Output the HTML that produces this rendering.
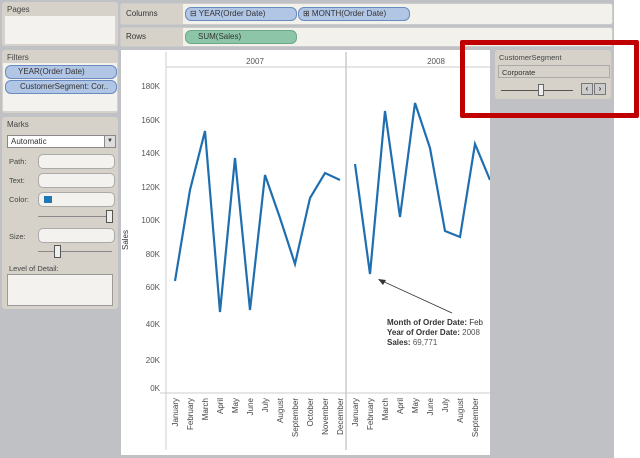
<!DOCTYPE html>
<html><head><style>
body{margin:0;width:640px;height:458px;background:#fff;position:relative;overflow:hidden;font-family:"Liberation Sans",sans-serif;font-size:8px;color:#333}
.a{position:absolute}
.panel{background:#d6d2ca;border-radius:3px}
.hd{font-size:8px;color:#444;padding:3px 0 0 5px}
.pill{position:absolute;height:12px;border:1px solid #6a8bbf;border-radius:6px;background:#b1c5e4;font-size:8px;line-height:12px;color:#333}
.fld{position:absolute;left:36px;width:75px;height:13px;background:#f3f2ef;border:1px solid #aaa;border-radius:5px}
.lbl{position:absolute;left:7px;font-size:7.5px;color:#444}
</style></head><body>
<div class="a" style="left:0;top:0;width:614px;height:458px;background:#c0c1c5"></div>
<!-- left -->
<div class="a panel" style="left:2px;top:2px;width:116px;height:44px"><div class="hd">Pages</div><div class="a" style="left:3px;top:14px;width:110px;height:28px;background:#f3f2ef"></div></div>
<div class="a panel" style="left:2px;top:50px;width:116px;height:63px"><div class="hd">Filters</div>
<div class="a" style="left:1px;top:13px;width:114px;height:48px;background:#f3f2ef"></div>
<div class="pill" style="left:3px;top:15px;width:110px;padding-left:0"><span style="margin-left:12px">YEAR(Order Date)</span></div>
<div class="pill" style="left:3px;top:30px;width:110px"><span style="margin-left:14px">CustomerSegment: Cor..</span></div></div>
<div class="a panel" style="left:2px;top:117px;width:116px;height:192px"><div class="hd">Marks</div>
<div class="a" style="left:5px;top:18px;width:104px;height:11px;background:#fff;border:1px solid #888;font-size:8px;line-height:11px;padding-left:3px">Automatic<div class="a" style="right:0;top:0;width:10px;height:11px;background:#ddd;border-left:1px solid #888;font-size:6px;text-align:center">▼</div></div>
<div class="lbl" style="top:40px">Path:</div><div class="fld" style="top:37px"></div>
<div class="lbl" style="top:59px">Text:</div><div class="fld" style="top:56px"></div>
<div class="lbl" style="top:78px">Color:</div><div class="fld" style="top:75px"><div class="a" style="left:5px;top:3px;width:8px;height:7px;background:#1f77b4"></div></div>
<div class="a" style="left:36px;top:99px;width:74px;height:1px;background:#888"></div><div class="a" style="left:104px;top:93px;width:5px;height:11px;background:#eee;border:1px solid #555"></div>
<div class="lbl" style="top:115px">Size:</div><div class="fld" style="top:111px"></div>
<div class="a" style="left:36px;top:134px;width:74px;height:1px;background:#888"></div><div class="a" style="left:52px;top:128px;width:5px;height:11px;background:#eee;border:1px solid #555"></div>
<div class="lbl" style="top:147px">Level of Detail:</div>
<div class="a" style="left:5px;top:157px;width:104px;height:30px;background:#f3f2ef;border:1px solid #999"></div>
</div>
<!-- shelves -->
<div class="a panel" style="left:120px;top:3px;width:491px;height:20px;background:#f2f1ec;border:1px solid #ccc"><div class="a" style="left:0;top:0;width:62px;height:20px;background:#d6d2ca;font-size:8px;line-height:20px;padding-left:5px;box-sizing:border-box">Columns</div>
<div class="pill" style="left:64px;top:3px;width:110px"><span style="margin-left:4px">⊟ YEAR(Order Date)</span></div>
<div class="pill" style="left:177px;top:3px;width:110px"><span style="margin-left:4px">⊞ MONTH(Order Date)</span></div></div>
<div class="a panel" style="left:120px;top:27px;width:491px;height:18px;background:#f2f1ec;border:1px solid #ccc"><div class="a" style="left:0;top:0;width:62px;height:18px;background:#d6d2ca;font-size:8px;line-height:18px;padding-left:5px;box-sizing:border-box">Rows</div>
<div class="pill" style="left:64px;top:2px;width:110px;background:#8dc5a8;border-color:#6aa98a"><span style="margin-left:12px">SUM(Sales)</span></div></div>
<!-- chart -->
<svg class="a" style="left:121px;top:50px" width="369" height="405" viewBox="121 50 369 405">
<rect x="121" y="50" width="369" height="405" fill="#fff"/>
<line x1="166" y1="52" x2="166" y2="450" stroke="#ccc"/>
<line x1="346" y1="52" x2="346" y2="450" stroke="#ccc" stroke-width="1.5"/>
<line x1="166" y1="67" x2="490" y2="67" stroke="#ccc"/>
<line x1="160" y1="393" x2="490" y2="393" stroke="#ccc"/>
<g font-size="8" fill="#555" text-anchor="middle"><text x="255" y="64">2007</text><text x="436" y="64">2008</text></g>
<g font-size="8" fill="#555" text-anchor="end">
<text x="160" y="89">180K</text><text x="160" y="123">160K</text><text x="160" y="156">140K</text><text x="160" y="190">120K</text><text x="160" y="223">100K</text><text x="160" y="257">80K</text><text x="160" y="290">60K</text><text x="160" y="327">40K</text><text x="160" y="363">20K</text><text x="160" y="391">0K</text></g>
<text transform="translate(128,240) rotate(-90)" font-size="8" fill="#333" text-anchor="middle">Sales</text>
<g font-size="8" fill="#444" text-anchor="end" id="m">
<text transform="translate(178,398) rotate(-90)">January</text><text transform="translate(193,398) rotate(-90)">February</text><text transform="translate(208,398) rotate(-90)">March</text><text transform="translate(223,398) rotate(-90)">April</text><text transform="translate(238,398) rotate(-90)">May</text><text transform="translate(253,398) rotate(-90)">June</text><text transform="translate(268,398) rotate(-90)">July</text><text transform="translate(283,398) rotate(-90)">August</text><text transform="translate(298,398) rotate(-90)">September</text><text transform="translate(313,398) rotate(-90)">October</text><text transform="translate(328,398) rotate(-90)">November</text><text transform="translate(343,398) rotate(-90)">December</text>
<text transform="translate(358,398) rotate(-90)">January</text><text transform="translate(373,398) rotate(-90)">February</text><text transform="translate(388,398) rotate(-90)">March</text><text transform="translate(403,398) rotate(-90)">April</text><text transform="translate(418,398) rotate(-90)">May</text><text transform="translate(433,398) rotate(-90)">June</text><text transform="translate(448,398) rotate(-90)">July</text><text transform="translate(463,398) rotate(-90)">August</text><text transform="translate(478,398) rotate(-90)">September</text></g>
<polyline fill="none" stroke="#1f6fb0" stroke-width="2.2" stroke-linejoin="miter" points="175,281 190,190 205,131 220,312 235,158 250,310 265,175 280,218 295,264 310,198 325,173 340,180"/>
<polyline fill="none" stroke="#1f6fb0" stroke-width="2.2" points="355,164 370,274 385,111 400,217 415,103 430,148 445,231 460,237 475,144 490,180"/>
<line x1="380" y1="280" x2="452" y2="313" stroke="#333" stroke-width="0.8"/><polygon points="378,279 386,280 383,285" fill="#333"/>
<g font-size="8"><text x="387" y="325" fill="#333"><tspan font-weight="bold">Month of Order Date:</tspan> Feb</text>
<text x="387" y="335" fill="#333"><tspan font-weight="bold">Year of Order Date:</tspan> <tspan fill="#555">2008</tspan></text>
<text x="387" y="345" fill="#333"><tspan font-weight="bold">Sales:</tspan> <tspan fill="#555">69,771</tspan></text></g>
</svg>
<!-- customer segment -->
<div class="a panel" style="left:495px;top:50px;width:116px;height:49px">
<div style="font-size:7.5px;color:#444;padding:3px 0 0 4px">CustomerSegment</div>
<div class="a" style="left:3px;top:15px;width:108px;height:13px;border:1px solid #aaa;font-size:7.5px;line-height:13px;padding-left:3px;box-sizing:border-box;width:112px">Corporate</div>
<div class="a" style="left:6px;top:40px;width:72px;height:1px;background:#555"></div>
<div class="a" style="left:43px;top:34px;width:4px;height:10px;background:#eee;border:1px solid #666"></div>
<div class="a" style="left:86px;top:33px;width:10px;height:10px;border:1px solid #777;background:#ccc;font-size:8px;line-height:10px;text-align:center;font-weight:bold">‹</div>
<div class="a" style="left:99px;top:33px;width:10px;height:10px;border:1px solid #777;background:#ccc;font-size:8px;line-height:10px;text-align:center;font-weight:bold">›</div>
</div>
<div class="a" style="left:460px;top:40px;width:169px;height:68px;border:5px solid #c00000;border-radius:2px"></div>
</body></html>
